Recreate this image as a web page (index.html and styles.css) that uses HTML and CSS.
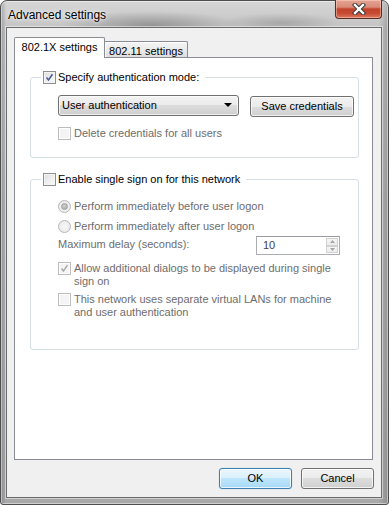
FILE: index.html
```html
<!DOCTYPE html>
<html>
<head>
<meta charset="utf-8">
<title>Advanced settings</title>
<link rel="stylesheet" href="styles.css">
</head>
<body>
<div class="window">
  <div class="titlebar">
    <span class="title">Advanced settings</span>
    <div class="close">
      <svg width="14" height="12" viewBox="0 0 14 12">
        <path d="M3 2 L11 10 M11 2 L3 10" stroke="#3a3a3a" stroke-width="4.4" stroke-linecap="square" fill="none"/>
        <path d="M3 2 L11 10 M11 2 L3 10" stroke="#ffffff" stroke-width="2.4" stroke-linecap="square" fill="none"/>
      </svg>
    </div>
  </div>
  <div class="client">
    <div class="tabs">
      <div class="tab active">802.1X settings</div>
      <div class="tab">802.11 settings</div>
    </div>
    <div class="pane">
      <fieldset class="group g1">
        <legend class="legend">
          <span class="cb checked">
            <svg width="9" height="9" viewBox="0 0 9 9"><path d="M1.5 4.5 L3.5 7 L7.5 1.2" stroke="#4a5f97" stroke-width="1.6" fill="none"/></svg>
          </span>
          <span class="lbl">Specify authentication mode:</span>
        </legend>
        <div class="combo-row">
          <div class="combo">User authentication<span class="arrow"></span></div>
          <div class="btn save">Save credentials</div>
        </div>
        <div class="opt disabled del">
          <span class="cb dis"></span>
          <span class="lbl">Delete credentials for all users</span>
        </div>
      </fieldset>

      <fieldset class="group g2">
        <legend class="legend">
          <span class="cb"></span>
          <span class="lbl">Enable single sign on for this network</span>
        </legend>
        <div class="opt disabled r1">
          <span class="radio dis on"><span class="dot"></span></span>
          <span class="lbl">Perform immediately before user logon</span>
        </div>
        <div class="opt disabled r2">
          <span class="radio dis"></span>
          <span class="lbl">Perform immediately after user logon</span>
        </div>
        <div class="delay-row disabled">
          <span class="lbl">Maximum delay (seconds):</span>
          <div class="spin">
            <span class="spin-val">10</span>
            <span class="spin-btns">
              <span class="sb up"><svg width="5" height="3" viewBox="0 0 5 3"><path d="M0 3 L2.5 0 L5 3Z" fill="#a6a6a6"/></svg></span>
              <span class="sb down"><svg width="5" height="3" viewBox="0 0 5 3"><path d="M0 0 L2.5 3 L5 0Z" fill="#a6a6a6"/></svg></span>
            </span>
          </div>
        </div>
        <div class="opt disabled allow">
          <span class="cb dis">
            <svg width="9" height="9" viewBox="0 0 9 9"><path d="M1.5 4.5 L3.5 7 L7.5 1.2" stroke="#a8a8a8" stroke-width="1.4" fill="none"/></svg>
          </span>
          <span class="lbl wrap">Allow additional dialogs to be displayed during single sign on</span>
        </div>
        <div class="opt disabled vlan">
          <span class="cb dis"></span>
          <span class="lbl wrap">This network uses separate virtual LANs for machine and user authentication</span>
        </div>
      </fieldset>
    </div>
    <div class="buttons">
      <div class="btn default">OK</div>
      <div class="btn">Cancel</div>
    </div>
  </div>
</div>
</body>
</html>
```

FILE: styles.css
```css
* { box-sizing: border-box; }
html, body { margin: 0; padding: 0; background: #fff; }
body {
  font-family: "Liberation Sans", Arial, sans-serif;
  font-size: 11px;
  color: #000;
}
.window {
  width: 389px;
  height: 505px;
  border: 1px solid #4e4e4e;
  border-radius: 7px 7px 3px 3px;
  padding: 0 6px 6px 5px;
  display: flex;
  flex-direction: column;
  background:
    radial-gradient(ellipse 90px 14px at 150px 24px, rgba(110,110,110,0.55), rgba(110,110,110,0) 100%),
    radial-gradient(ellipse 60px 10px at 280px 22px, rgba(120,120,120,0.4), rgba(120,120,120,0) 100%),
    linear-gradient(to right, rgba(80,88,104,0.35) 0, rgba(80,88,104,0) 5px, rgba(0,0,0,0) 378px, rgba(80,80,80,0.3) 387px),
    linear-gradient(to bottom, #d6d6d6 0, #c2c2c2 30px, #b4b4b4 200px, #a9a9a9 100%);
  box-shadow: inset 0 0 0 1px rgba(255,255,255,0.45);
}
.titlebar {
  height: 26px;
  display: flex;
  justify-content: space-between;
  align-items: flex-start;
  flex: none;
}
.title {
  font-size: 12px;
  padding-left: 2px;
  margin-top: 7px;
  color: #000;
  text-shadow: 0 0 6px rgba(255,255,255,0.9), 0 0 3px rgba(255,255,255,0.9);
}
.close {
  width: 47px;
  height: 19px;
  margin-top: -1px;
  border: 1px solid #5a2a24;
  border-top: none;
  border-radius: 0 0 4px 4px;
  background: linear-gradient(to bottom, #e7a595 0, #d88a76 40%, #c2432b 50%, #c84b33 75%, #dd7a5d 100%);
  box-shadow: inset 0 0 0 1px rgba(255,220,210,0.45);
  display: flex;
  align-items: center;
  justify-content: center;
}
.close svg { display: block; }
.client {
  flex: 1;
  border: 1px solid #6c6c6c;
  background: #f0f0f0;
  padding: 9px 7px 8px 7px;
  display: flex;
  flex-direction: column;
  box-shadow: 0 0 0 1px rgba(255,255,255,0.45);
}
.tabs {
  display: flex;
  align-items: flex-end;
  height: 20px;
  flex: none;
}
.tab {
  height: 16px;
  width: 84px;
  border: 1px solid #898c95;
  border-bottom: none;
  margin-left: -1px;
  background: linear-gradient(to bottom, #f4f4f4 0, #ebebeb 50%, #dedede 100%);
  box-shadow: inset 1px 1px 0 #fff;
  border-radius: 2px 2px 0 0;
  text-align: center;
  line-height: 16px;
  padding-top: 1px;
}
.tab.active {
  width: 91px;
  height: 21px;
  margin-left: 0;
  margin-bottom: -1px;
  background: #fff;
  box-shadow: none;
  position: relative;
  z-index: 1;
  line-height: 18px;
  padding-top: 0;
}
.pane {
  width: 359px;
  height: 403px;
  border: 1px solid #898c95;
  background: #fff;
  padding-top: 13px;
  flex: none;
}
.group {
  margin: 0 13px 0 15px;
  border: 1px solid #d5dfe5;
  border-radius: 3px;
  padding: 11px 0 17px 10px;
  min-width: 0;
}
.g2 { margin-top: 15px; padding-top: 14px; padding-bottom: 30px; }
.legend {
  padding: 0 6px 0 2px;
  display: flex;
  align-items: center;
  height: 13px;
  line-height: 13px;
}
.legend .lbl { margin-left: 2px; }
.cb {
  width: 13px;
  height: 13px;
  flex: none;
  border: 1px solid #8e8f8f;
  background: linear-gradient(135deg, #dcdcdc 0, #f0f0f0 55%, #fbfbfb 100%);
  box-shadow: inset 0 0 0 1px #f4f4f4;
  display: flex;
  align-items: center;
  justify-content: center;
}
.cb svg { display: block; }
.cb.dis {
  border-color: #bcbcbc;
  background: #f4f4f4;
  box-shadow: inset 0 0 0 1px #fff;
}
.radio {
  width: 13px;
  height: 13px;
  flex: none;
  border-radius: 50%;
  border: 1px solid #b7b7b7;
  background: radial-gradient(circle at 50% 50%, #f8f8f8 0, #e6e6e6 100%);
  display: flex;
  align-items: center;
  justify-content: center;
}
.radio .dot {
  width: 7px;
  height: 7px;
  border-radius: 50%;
  background: radial-gradient(circle at 45% 40%, #d2d2d2 0, #9e9e9e 100%);
  border: 1px solid #a6a6a6;
}
.combo-row {
  display: flex;
  align-items: flex-start;
  margin-left: 17px;
}
.combo {
  width: 181px;
  height: 21px;
  border: 1px solid #707070;
  border-radius: 3px;
  background: linear-gradient(to bottom, #f2f2f2 0, #ebebeb 50%, #dddddd 50%, #cfcfcf 100%);
  box-shadow: inset 0 0 0 1px rgba(255,255,255,0.7);
  padding-left: 3px;
  line-height: 19px;
  position: relative;
}
.arrow {
  position: absolute;
  right: 6px;
  top: 7px;
  width: 0;
  height: 0;
  border-left: 4px solid transparent;
  border-right: 4px solid transparent;
  border-top: 4px solid #000;
}
.btn {
  height: 21px;
  border: 1px solid #707070;
  border-radius: 3px;
  background: linear-gradient(to bottom, #f2f2f2 0, #ebebeb 50%, #dddddd 50%, #cfcfcf 100%);
  box-shadow: inset 0 0 0 1px rgba(255,255,255,0.7);
  text-align: center;
  line-height: 19px;
}
.btn.save {
  width: 104px;
  margin-left: 11px;
  margin-top: 1px;
}
.opt {
  display: flex;
  align-items: flex-start;
  margin-left: 17px;
  line-height: 13px;
}
.opt .lbl { margin-left: 3px; }
.disabled { color: #6d6d6d; }
.del { margin-top: 10px; }
.r2 { margin-top: 7px; }
.delay-row {
  margin-left: 17px;
  margin-top: 3px;
  width: 282px;
  display: flex;
  justify-content: space-between;
  align-items: center;
}
.delay-row .lbl { margin-top: -3px; }
.spin {
  width: 84px;
  height: 19px;
  border: 1px solid #abadb3;
  border-top-color: #9a9ca1;
  background: #fff;
  display: flex;
  justify-content: space-between;
}
.spin-val {
  padding-left: 6px;
  line-height: 17px;
  color: #444;
}
.spin-btns {
  width: 13px;
  display: flex;
  flex-direction: column;
  padding: 1px 1px 1px 0;
}
.sb {
  flex: 1;
  border: 1px solid #d2d2d2;
  background: linear-gradient(to bottom, #f6f6f6, #ececec);
  display: flex;
  align-items: center;
  justify-content: center;
}
.allow { margin-top: 7px; }
.vlan { margin-top: 5px; }
.wrap { width: 262px; }
.buttons {
  display: flex;
  justify-content: flex-end;
  margin-top: 8px;
  flex: none;
}
.buttons .btn { width: 73px; margin-left: 9px; }
.btn.default {
  border-color: #3c7fb1;
  background: linear-gradient(to bottom, #eaf6fd 0, #d9f0fc 50%, #bee6fd 50%, #a7d9f5 100%);
  box-shadow: inset 0 0 0 1px rgba(255,255,255,0.75), 0 0 1px 0 #6fc3ec;
}
```
